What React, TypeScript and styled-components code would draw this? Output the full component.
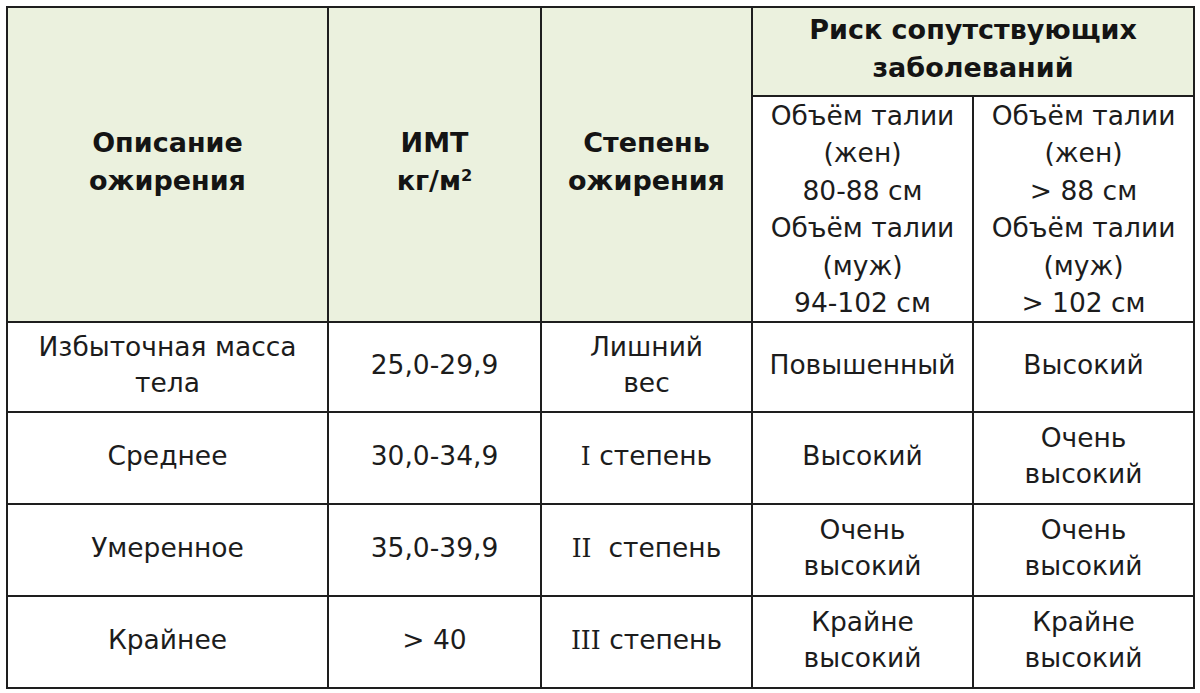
import React from "react";
import styled, { createGlobalStyle } from "styled-components";

const Global = createGlobalStyle`
  html, body { margin: 0; padding: 0; background: #ffffff; }
  body { font-family: "DejaVu Sans", Verdana, sans-serif; color: #1c1c1c; }
`;

const Page = styled.div`
  padding: 6px 0 0 6px;
  width: 1200px;
  height: 693px;
  box-sizing: border-box;
  background: #ffffff;
  overflow: hidden;
`;

const Table = styled.table`
  border-collapse: collapse;
  width: 1187px;
  table-layout: fixed;
  font-size: 26.5px;
`;

const Row = styled.tr<{ $h: number }>`
  height: ${(p) => p.$h}px;
`;

const HeadCell = styled.th`
  background: #ebf1de;
  border: 2px solid #1e1e1e;
  font-weight: bold;
  font-size: 27px;
  text-align: center;
  vertical-align: middle;
  line-height: 38px;
  padding: 0 2px 5px;
  color: #141414;
`;

const SubHeadCell = styled.td`
  background: #ffffff;
  border: 2px solid #1e1e1e;
  text-align: center;
  vertical-align: top;
  line-height: 37.4px;
  padding: 0 2px;
`;

const Cell = styled.td`
  border: 2px solid #1e1e1e;
  text-align: center;
  vertical-align: middle;
  line-height: 36px;
  padding: 0 2px 4px;
  white-space: pre-line;
`;

const Numeral = styled.span`
  font-family: "DejaVu Serif", "Liberation Serif", serif;
  font-size: 0.95em;
`;

const Sup = styled.sup`
  font-size: 0.6em;
  vertical-align: 0.55em;
  line-height: 0;
`;

type Degree = { numeral: string; gap: string };

const rows: (string | Degree)[][] = [
  ["Избыточная масса\nтела", "25,0-29,9", "Лишний\nвес", "Повышенный", "Высокий"],
  ["Среднее", "30,0-34,9", { numeral: "I", gap: " " }, "Высокий", "Очень\nвысокий"],
  ["Умеренное", "35,0-39,9", { numeral: "II", gap: "\u00a0 " }, "Очень\nвысокий", "Очень\nвысокий"],
  ["Крайнее", "> 40", { numeral: "III", gap: " " }, "Крайне\nвысокий", "Крайне\nвысокий"],
];

export default function App() {
  return (
    <>
      <Global />
      <Page>
        <Table>
          <colgroup>
            <col style={{ width: 321 }} />
            <col style={{ width: 213 }} />
            <col style={{ width: 211 }} />
            <col style={{ width: 221 }} />
            <col style={{ width: 221 }} />
          </colgroup>
          <thead>
            <Row $h={89}>
              <HeadCell rowSpan={2}>
                Описание
                <br />
                ожирения
              </HeadCell>
              <HeadCell rowSpan={2}>
                ИМТ
                <br />
                кг/м<Sup>2</Sup>
              </HeadCell>
              <HeadCell rowSpan={2}>
                Степень
                <br />
                ожирения
              </HeadCell>
              <HeadCell colSpan={2}>
                Риск сопутствующих
                <br />
                заболеваний
              </HeadCell>
            </Row>
            <Row $h={226}>
              <SubHeadCell>
                Объём талии
                <br />
                (жен)
                <br />
                80-88 см
                <br />
                Объём талии
                <br />
                (муж)
                <br />
                94-102 см
              </SubHeadCell>
              <SubHeadCell>
                Объём талии
                <br />
                (жен)
                <br />
                &gt; 88 см
                <br />
                Объём талии
                <br />
                (муж)
                <br />
                &gt; 102 см
              </SubHeadCell>
            </Row>
          </thead>
          <tbody>
            {rows.map((r, i) => (
              <Row key={i} $h={i === 0 ? 90 : 92}>
                {r.map((c, j) => (
                  <Cell key={j}>
                    {typeof c === "string" ? (
                      c
                    ) : (
                      <>
                        <Numeral>{c.numeral}</Numeral>
                        {c.gap}степень
                      </>
                    )}
                  </Cell>
                ))}
              </Row>
            ))}
          </tbody>
        </Table>
      </Page>
    </>
  );
}
